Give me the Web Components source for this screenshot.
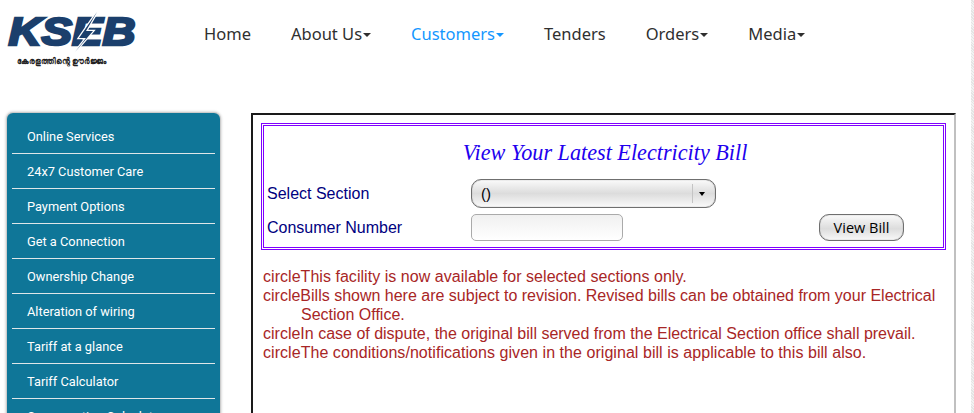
<!DOCTYPE html>
<html lang="en"><head><meta charset="utf-8"><title>KSEB</title>
<style>
html,body{margin:0;padding:0;background:#fff;height:413px;overflow:hidden}
body{display:flex;font-family:"Liberation Sans",Arial,sans-serif}
</style></head><body>
<kseb-page>
  <kseb-header>
    <kseb-logo></kseb-logo>
    <kseb-nav>
      <nav-link>Home</nav-link>
      <nav-link caret>About Us</nav-link>
      <nav-link caret active>Customers</nav-link>
      <nav-link>Tenders</nav-link>
      <nav-link caret>Orders</nav-link>
      <nav-link caret>Media</nav-link>
    </kseb-nav>
  </kseb-header>
  <kseb-body>
    <side-menu>
      <side-item>Online Services</side-item>
      <side-item>24x7 Customer Care</side-item>
      <side-item>Payment Options</side-item>
      <side-item>Get a Connection</side-item>
      <side-item>Ownership Change</side-item>
      <side-item>Alteration of wiring</side-item>
      <side-item>Tariff at a glance</side-item>
      <side-item>Tariff Calculator</side-item>
      <side-item>Consumption Calculator</side-item>
    </side-menu>
    <bill-panel>
      <bill-form></bill-form>
      <bill-notes>
        <bill-note style="letter-spacing:.04px">This facility is now available for selected sections only.</bill-note>
        <bill-note>Bills shown here are subject to revision. Revised bills can be obtained from your Electrical Section Office.</bill-note>
        <bill-note>In case of dispute, the original bill served from the Electrical Section office shall prevail.</bill-note>
        <bill-note style="letter-spacing:.05px">The conditions/notifications given in the original bill is applicable to this bill also.</bill-note>
      </bill-notes>
    </bill-panel>
  </kseb-body>
</kseb-page>
<page-scrollbar></page-scrollbar>
<script>
function def(name, css, html){
  customElements.define(name, class extends HTMLElement{
    constructor(){super();this.attachShadow({mode:"open"}).innerHTML="<style>"+css+"</style>"+html;}
  });
}
def("kseb-page",":host{display:flex;flex-direction:column;flex:1;min-width:0;height:413px;overflow:hidden}","<slot></slot>");
def("page-scrollbar",":host{display:block;width:3px;height:413px;background:repeating-linear-gradient(45deg,#e4e4e4 0 1px,#f2f2f2 1px 2px)}","");
def("kseb-header",":host{display:flex;height:113px;flex:none;box-sizing:border-box;padding:12px 0 0 7px}","<slot></slot>");
def("kseb-logo",":host{display:block;width:132px;height:60px;flex:none}svg{display:block;overflow:visible}",
`<svg width="132" height="60" viewBox="0 0 132 60">
<text x="1.5" y="32.5" font-family="Liberation Sans" font-weight="700" font-style="italic" font-size="38" fill="#1b3f6c" textLength="127" lengthAdjust="spacingAndGlyphs" stroke="#1b3f6c" stroke-width="2.4">KSEB</text>
<path d="M90 0 L72 26 L79 26 L68 40 L86 19 L79 19 Z" fill="#1b3f6c" stroke="#fff" stroke-width="2.5" paint-order="stroke"/>
<text x="10" y="51.5" font-family="'Noto Sans','DejaVu Sans',sans-serif" font-weight="700" font-size="7.5" fill="#222" textLength="89" lengthAdjust="spacingAndGlyphs">കേരളത്തിന്റെ ഊർജ്ജം</text>
</svg>`);
def("kseb-nav",":host{display:flex;gap:40px;margin-left:65px;height:44px;align-items:center}","<slot></slot>");
customElements.define("nav-link", class extends HTMLElement{
  constructor(){super();this.attachShadow({mode:"open"}).innerHTML=`<style>
  :host{display:inline-flex;align-items:center;font:16.5px/22px "Noto Sans",sans-serif;color:#2f2f2f;white-space:nowrap}
  :host([active]){color:#1497ff}
  i{display:none;width:0;height:0;border:4px solid transparent;border-top-color:currentColor;border-bottom:0;margin:2px 0 0 1px}
  :host([caret]) i{display:block}
  </style><slot></slot><i></i>`;}
});
def("kseb-body",":host{display:flex;align-items:flex-start;padding-left:7px;flex:1}","<slot></slot>");
def("side-menu",":host{display:block;width:213px;box-sizing:border-box;flex:none;margin-right:31px;padding:6px 5px 0;background:#0f7698;border-radius:6px;box-shadow:0 0 0 1px #ccc,0 0 3px 1px #bbb}","<slot></slot>");
def("side-item",":host{display:block;height:33px;padding-top:1px;border-bottom:1px solid #dfe6e8;padding-left:15px;font:12.8px/34px Roboto,sans-serif;color:#fff;white-space:nowrap}","<slot></slot>");
def("bill-panel",":host{display:block;width:705px;height:400px;flex:none;box-sizing:border-box;border-style:solid;border-width:2px;border-color:#1a1a1a #c0c0c0 #c0c0c0 #1a1a1a;padding:8px 8px 0}","<slot></slot>");
def("bill-form",`:host{display:grid;grid-template-columns:204px 348px 1fr;grid-template-rows:53px 29px 33px;align-content:start;height:127px;box-sizing:border-box;border:3px double #7f00ff;padding:0 0 0 3px;font:16px "Liberation Sans",sans-serif;color:#000080}
h1{grid-column:1/-1;margin:0;align-self:center;justify-self:center;font:italic 400 22.2px cursive,"Liberation Serif",serif;color:#2200ee}
label{align-self:center}
.row2{margin-top:6px}
.sel{position:relative;box-sizing:border-box;width:245px;height:29px;border:1px solid #6f6f6f;border-radius:10px;background:linear-gradient(#fafafa,#dcdcdc 50%,#fafafa);color:#000;font-size:15px;line-height:27px;padding-left:9px;box-shadow:inset 0 0 1px #777}
.sel::before{content:"";position:absolute;right:22px;top:4px;bottom:4px;width:1px;background:#c4c4c4}
.sel::after{content:"";position:absolute;right:10px;top:12px;border:3.5px solid transparent;border-top:4px solid #000;border-bottom:0}
input{box-sizing:border-box;display:block;width:152px;height:27px;border:1px solid #aaa;border-radius:5px;background:linear-gradient(#f0f0f0,#fff);margin:6px 0 0;padding:0}
button{justify-self:start;box-sizing:border-box;width:85px;height:27px;border:1px solid #6f6f6f;border-radius:10px;background:linear-gradient(#fafafa,#dcdcdc 55%,#f8f8f8);font:14.5px "Open Sans","Noto Sans",sans-serif;color:#000;padding:0;box-shadow:inset 0 0 1px #777}
`,`<h1>View Your Latest Electricity Bill</h1>
<label>Select Section</label><div class="sel">()</div><span></span>
<label class="row2">Consumer Number</label><input class="row2" type="text"><button class="row2">View Bill</button>`);
def("bill-notes",":host{display:block;margin-top:17px;font:16px/19px \"Liberation Sans\",sans-serif;color:#a82626;padding:0 4px 0 2px}","<slot></slot>");
def("bill-note",":host{display:block;padding-left:38px;text-indent:-38px}","<span>circle</span><slot></slot>");
</script>
</body></html>
